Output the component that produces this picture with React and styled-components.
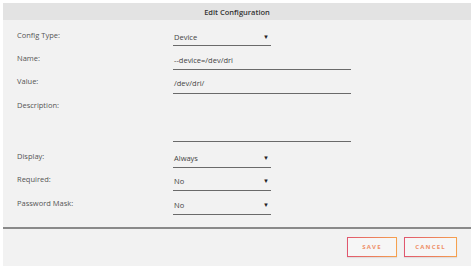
import React from 'react';
import styled, { createGlobalStyle } from 'styled-components';

const Global = createGlobalStyle`
    html, body {
        margin: 0;
        padding: 0;
        background: #fff;
    }
    body {
        font-family: "Open Sans", "Noto Sans", sans-serif;
    }
`

const Modal = styled.div`
    margin: 3px;
    width: 468px;
    height: 263px;
    display: flex;
    flex-direction: column;
    background-color: #f2f2f2;
`

const Header = styled.div`
    height: 17px;
    display: flex;
    align-items: center;
    justify-content: center;
    background-color: #e3e3e3;
    color: #333;
    font-size: 7.5px;
    font-weight: 600;
`

const Body = styled.div`
    flex: 1;
    padding: 8px 0 0 14px;
    display: grid;
    grid-template-columns: 156px 1fr;
    grid-auto-rows: min-content;
`

const Label = styled.div`
    font-size: 7.5px;
    color: #555;
    height: ${props => props.h}px;
    padding-top: 2px;
    box-sizing: border-box;
`

const Field = styled.div`
    width: ${props => props.wide ? '178px' : '98px'};
    height: ${props => props.h}px;
`

const Control = styled.div`
    width: 100%;
    height: ${props => props.u}px;
    display: flex;
    align-items: flex-start;
    justify-content: space-between;
    padding: 4px 2px 0 1px;
    box-sizing: border-box;
    border-bottom: 1px solid #6a6a6a;
    font-size: 7.5px;
    line-height: 10px;
    color: #444;
`

const Arrow = styled.span`
    font-size: 6px;
    color: #222;
`

const Divider = styled.div`
    height: 2px;
    background-color: #8a8a8a;
`

const Footer = styled.div`
    height: 37px;
    display: flex;
    justify-content: flex-end;
    align-items: flex-start;
    gap: 7px;
    padding: 8px 14px 0 0;
    box-sizing: border-box;
`

const Button = styled.button`
    width: ${props => props.w}px;
    height: 20px;
    padding: 0;
    background: #f6f6f6;
    border: 1.5px solid;
    border-image: linear-gradient(90deg, #e0566e, #f6a24e) 1;
    color: #ee9068;
    font-family: "Open Sans", sans-serif;
    font-size: 6px;
    font-weight: 700;
    letter-spacing: 1.2px;
    box-shadow: 0 1px 1px rgba(0,0,0,0.08);
`

const rows = [
    { label: 'Config Type:', value: 'Device', select: true, h: 23, u: 18 },
    { label: 'Name:', value: '--device=/dev/dri', h: 23, u: 19 },
    { label: 'Value:', value: '/dev/dri/', h: 24, u: 20 },
    { label: 'Description:', value: '', h: 51, u: 44 },
    { label: 'Display:', value: 'Always', select: true, h: 23, u: 19 },
    { label: 'Required:', value: 'No', select: true, h: 24, u: 19 },
    { label: 'Password Mask:', value: 'No', select: true, h: 24, u: 19 },
]

const App = () => {
    return <>
        <Global />
        <Modal>
            <Header>Edit Configuration</Header>
            <Body>
                {rows.map(row => (
                    <React.Fragment key={row.label}>
                        <Label h={row.h}>{row.label}</Label>
                        <Field h={row.h} wide={!row.select}>
                            <Control u={row.u}>
                                <span>{row.value}</span>
                                {row.select && <Arrow>▼</Arrow>}
                            </Control>
                        </Field>
                    </React.Fragment>
                ))}
            </Body>
            <Divider />
            <Footer>
                <Button w={50}>SAVE</Button>
                <Button w={53}>CANCEL</Button>
            </Footer>
        </Modal>
    </>
}

export default App
